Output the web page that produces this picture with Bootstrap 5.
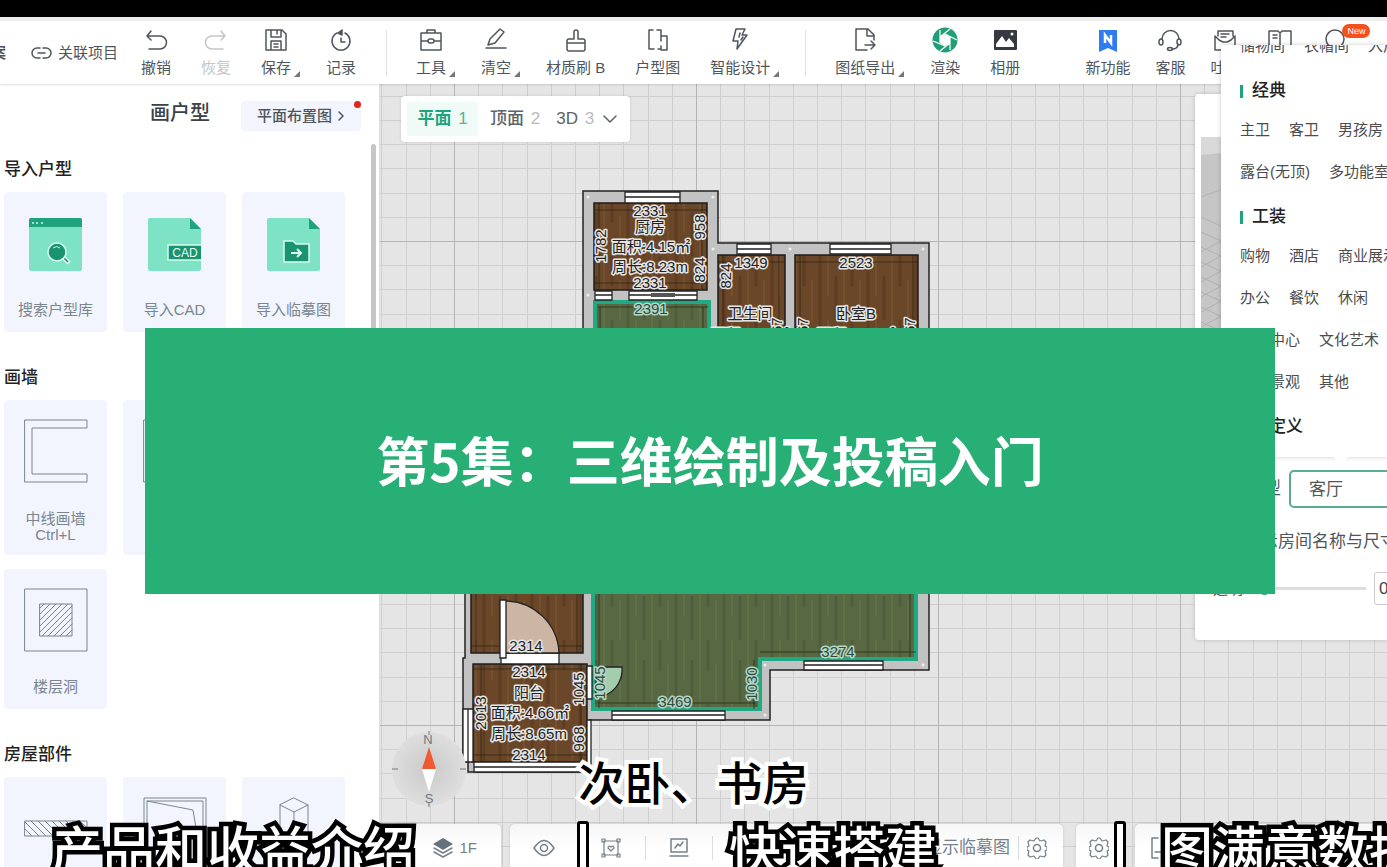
<!DOCTYPE html>
<html lang="zh-CN">
<head>
<meta charset="utf-8">
<meta name="viewport" content="width=device-width, initial-scale=1">
<title>第5集：三维绘制及投稿入门</title>
<link rel="stylesheet" href="https://cdn.jsdelivr.net/npm/bootstrap@5.3.0/dist/css/bootstrap.min.css">
<script src="https://cdn.jsdelivr.net/npm/bootstrap@5.3.0/dist/js/bootstrap.bundle.min.js"></script>
<style>
  :root { --ink:#50555c; --green:#1fa37c; --tile:#f2f5fd; }
  body { font-family:"Liberation Sans","Noto Sans CJK SC",sans-serif; font-size:15px; line-height:20px; color:var(--ink); background:#fff; }
  button { font-family:inherit; color:inherit; }
  svg { display:block; flex:none; }
  .ln { fill:none; stroke:currentColor; stroke-width:1.5; stroke-linejoin:round; stroke-linecap:round; }
  .letterbox { height:17px; background:#000; flex:none; }
  .topbar { height:67px; background:#fff; border-top:4px solid #eee; box-shadow:0 1px 2px #0002; z-index:3; }
  .cut-name { width:6px; }
  .project { gap:6px; margin-left:25px; margin-right:23px; }
  .tools { gap:30px; }
  .tool { border:0; background:none; padding:0; display:flex; flex-direction:column; align-items:center; gap:5px; white-space:nowrap; position:relative; }
  .tool.more { margin-right:5px; }
  .tool.more::after { content:""; position:absolute; right:-9px; bottom:1px; border:3px solid; border-color:transparent #777 #777 transparent; }
  .tool:disabled { color:#c4c6c8; }
  .rule { width:1px; height:46px; background:#e2e2e2; margin:0 -1px 0 0; }
  .support { gap:25px; margin-left:65px; }
  .newtag { left:22px; top:-3px; padding:0 5px; border-radius:8px; background:#f4511e; color:#fff; font-size:9px; line-height:14px; }

  .side { width:380px; background:#fff; padding-left:4px; border-right:1px solid #ddd; overflow:hidden; flex:none; }
  .side h1 { font-size:20px; line-height:30px; margin:0; color:#3c4148; }
  .side-head { padding:14px 18px 0 146px; }
  .layout-btn { border:0; background:var(--tile); border-radius:4px; width:120px; height:30px; font-weight:500; gap:6px; margin-top:3px; padding:0; }
  .reddot { width:7px; height:7px; border-radius:50%; background:#e0261c; right:0; top:0; }
  .side section { padding-top:34px; }
  .side section.lead-in { padding-top:27px; }
  .sect { font-size:17px; line-height:24px; font-weight:500; color:#222; margin:0 0 10px; }
  .tiles { display:grid; grid-template-columns:repeat(3,103px); gap:14px 16px; }
  .tile { border:0; border-radius:4px; background:var(--tile); height:140px; padding:0; display:flex; flex-direction:column; align-items:center; justify-content:space-between; padding:19px 0 14px; color:#7a858f; line-height:16px; }
  .tile.lib { padding-top:26px; }
  .tile.tall { height:155px; padding-bottom:12px; }
  .scroller { width:5px; height:330px; right:3px; top:60px; background:#c6c6c6; border-radius:3px; }

  .stage { background:#e5e5e5; min-width:0; }
  .dim { font-size:15px; fill:#222; stroke:#e6e6e6; stroke-width:3px; paint-order:stroke; stroke-linejoin:round; text-anchor:middle; }
  .dim.on { fill:#2c4a40; stroke:#b5d8c6; }
  .views { left:21px; top:12px; width:229px; height:46px; background:#fff; border-radius:4px; padding:6px; font-size:17px; box-shadow:0 0 3px #0002; }
  .views button { border:0; background:none; padding:0; white-space:nowrap; color:#5d6369; font-weight:500; }
  .views small { font-size:17px; color:#b8bbbe; font-weight:400; margin-left:2px; }
  .views .on { background:#f0faf7; color:var(--green); font-weight:700; width:71px; height:34px; border-radius:3px; margin-right:12px; }
  .views .on small { color:#4cb899; }

  .dock { left:15px; right:0; bottom:0; height:43px; gap:9px; }
  .pod { background:linear-gradient(#f6f6f6,#fff 60%); border-radius:5px 5px 0 0; box-shadow:0 0 3px #0002; display:flex; align-items:center; color:#76808a; padding-top:4px; }
  .pod button { border:0; background:none; padding:0; display:flex; align-items:center; justify-content:center; gap:6px; white-space:nowrap; }
  .pod .sep { width:1px; height:24px; background:#dcdcdc; }
  .pod .trace { font-size:17px; }

  .props { right:0; top:10px; width:192px; height:546px; background:#fff; border-radius:4px 0 0 4px; box-shadow:0 0 4px #0003; overflow:hidden; }
  .props label { font-size:17px; white-space:nowrap; flex:none; }
  .props .form-check-input { flex:none; }
  .preview { left:6px; top:43px; }
  .room-type { width:160px; height:38px; border:2px solid #58ad90; border-radius:5px; padding:0 18px 3px; font-size:17px; color:#555; background:#fff; flex:none; }
  .pct { width:48px; height:33px; border:1px solid #ccc; border-radius:3px; padding:0 4px; font-size:17px; flex:none; color:#444; background:#fff; }
  .fade-range { width:109px; flex:none; appearance:none; height:3px; background:#ddd; }
  .fade-range::-webkit-slider-thumb { appearance:none; width:13px; height:13px; border-radius:50%; background:var(--green); }
  .props-form { padding:0 0 0 18px; margin-top:328px; }
  .props .fade-label { font-size:15px; width:36px; }

  .pick { right:0; top:45px; width:166px; height:412px; background:#fff; box-shadow:0 0 5px #0003; z-index:4; padding-left:19px; border-radius:3px 0 0 3px; }
  .pick-in { height:412px; overflow:hidden; }
  .pick ul { display:flex; list-style:none; gap:19px; margin:0; padding:0; height:42px; align-items:center; white-space:nowrap; }
  .pick ul:first-child { margin-top:-20px; }
  .pick a { color:#4c4c4c; text-decoration:none; }
  .pick h2 { font-size:17px; font-weight:500; color:#222; height:42px; margin:0; padding-top:6px; display:flex; align-items:center; gap:10px; }
  .pick h2::before { content:""; width:3px; height:13px; background:var(--green); margin-right:-1px; }
  .pick::after { content:""; position:absolute; left:115px; bottom:-5px; width:10px; height:10px; background:#fff; transform:rotate(45deg); }

  .headline { left:145px; right:112px; top:328px; height:266px; padding-bottom:4px; background:#27af75; z-index:6; color:#fff; font-size:53px; line-height:64px; font-weight:700; font-family:"Noto Sans CJK SC",sans-serif; }
  .subtitle-line { left:0; right:0; bottom:60px; z-index:6; text-align:center; font:500 46px/54px "Noto Sans CJK SC",sans-serif; color:#000; -webkit-text-stroke:8px #fff; paint-order:stroke fill; stroke-linejoin:round; }
  .caption-line { left:51px; right:0; bottom:-8px; height:54px; z-index:7; white-space:nowrap; font:500 52px/54px "Noto Sans CJK SC",sans-serif; color:#fff; -webkit-text-stroke:9px #000; paint-order:stroke fill; stroke-linejoin:round; }
  .caption-line i { width:12px; height:60px; border:3px solid #000; border-radius:3px; background:#fff; flex:none; }
</style>
</head>
<body class="vh-100 overflow-hidden d-flex flex-column position-relative">
<div class="letterbox"></div>
<header class="topbar d-flex align-items-center flex-shrink-0 position-relative">
  <div class="cut-name d-flex justify-content-end overflow-hidden flex-shrink-0 fw-bold">案</div>
  <a href="#" class="project d-flex align-items-center text-decoration-none text-reset text-nowrap">
    <svg width="21" height="14" class="ln"><path d="M9 2H6a5 5 0 0 0 0 10h3M12 2h3a5 5 0 0 1 0 10h-3M7 7h7"/></svg>关联项目</a>
  <nav class="tools d-flex align-items-center flex-shrink-0">
    <button class="tool"><svg width="24" height="26" class="ln"><path d="M7 4L3 9l4 4M3 9h13a5 5 0 0 1 0 13H5"/></svg>撤销</button>
    <button class="tool" disabled><svg width="24" height="26" class="ln"><path d="M17 4l4 5-4 4M21 9H8a5 5 0 0 0 0 13h11"/></svg>恢复</button>
    <button class="tool more"><svg width="24" height="26" class="ln"><path d="M2 3h16l4 4v16H2zM7 3v7h10V3M13 4v3M7 23v-9h10v9M10 17h4M10 20h4"/></svg>保存</button>
    <button class="tool"><svg width="24" height="26" class="ln"><path d="M8 6a9 9 0 1 0 8 0"/><path d="M13 3v5l-4-2z" fill="currentColor"/><path d="M12 11v4h4"/></svg>记录</button>
    <span class="rule"></span>
    <button class="tool more"><svg width="24" height="26" class="ln"><path d="M2 6h20v17H2zM8 6V3h8v3M2 14h7M15 14h7"/><rect x="9" y="12" width="6" height="4" rx="2"/></svg>工具</button>
    <button class="tool more"><svg width="24" height="26" class="ln"><path d="M2 21h20M4 18l2-6L16 2l4 3-9 11zM4 18l7-2"/></svg>清空</button>
    <button class="tool"><svg width="24" height="26" class="ln"><path d="M3 14v8a2 2 0 0 0 2 2h14a2 2 0 0 0 2-2v-8a2 2 0 0 0-2-2h-5V5a2 2 0 0 0-4 0v7H5a2 2 0 0 0-2 2zM3 16h18"/></svg>材质刷 B</button>
    <button class="tool"><svg width="24" height="26" class="ln"><path d="M7 3H3v19h5M11 3h4v6M15 9h6v14h-6v-4M15 9v5M12 22h3"/></svg>户型图</button>
    <button class="tool more"><svg width="24" height="26" class="ln"><path d="M8 2h9l-3 6h5L9 22l1-8H5zM12 6l-1 4M15 10l-2 3"/></svg>智能设计</button>
    <span class="rule"></span>
    <button class="tool more"><svg width="24" height="26" class="ln"><path d="M14 23H3V2h12l6 6v5M14 2v7h7M12 18h10M18 14l4 4-4 4"/></svg>图纸导出</button>
    <button class="tool"><svg width="26" height="26"><circle cx="13" cy="13" r="12.500" fill="#1f9e78"/><path d="M13 7l5 3v6l-5 3-5-3v-6z" fill="#fff"/><path d="M8 10l10-8M13 7l12 6M18 10v13M18 16L8 24M13 19L1 14M8 16V3" stroke="#fff" stroke-width="1.200"/></svg>渲染</button>
    <button class="tool"><svg width="24" height="26"><rect x="1" y="3" width="23" height="20" rx="1" fill="#363a40"/><path d="M3 20v-3l6-8 4 6 3-4 5 6v3z" fill="#fff"/><circle cx="19" cy="7" r="1.500" fill="#fff"/></svg>相册</button>
  </nav>
  <nav class="support d-flex align-items-center flex-shrink-0">
    <button class="tool"><svg width="24" height="26"><path d="M3 3h18v22l-9-4-9 4z" fill="#2f7bf0"/><path d="M9 16V8l6 8V8" fill="none" stroke="#fff" stroke-width="2.500"/></svg>新功能</button>
    <button class="tool"><svg width="24" height="26" class="ln"><path d="M4 12a8 8 0 0 1 17 0M20 17c0 4-3 5-6 5"/><ellipse cx="3" cy="15" rx="2" ry="3"/><ellipse cx="21" cy="15" rx="2" ry="3"/><ellipse cx="12" cy="22" rx="2.500" ry="1.500"/></svg>客服</button>
    <button class="tool"><svg width="24" height="26" class="ln"><path d="M5 9V4h15v5M2 9v14h20V9l-4 4-4 2h-4l-4-2zM8 7h8M8 10h5"/></svg>吐槽</button>
    <button class="tool"><svg width="24" height="26" class="ln"><path d="M12 6v18M1 4h9l2 2 2-2h9v18H1zM5 8h4M5 11h4"/></svg>学院</button>
    <button class="tool"><svg width="24" height="26" class="ln"><circle cx="12" cy="12" r="9"/><path d="M4 21h16"/></svg><span class="newtag position-absolute">New</span>消息</button>
  </nav>
</header>

<main class="d-flex flex-grow-1 position-relative overflow-hidden">
  <aside class="side position-relative">
    <div class="side-head d-flex justify-content-between">
      <h1 class="fw-medium">画户型</h1>
      <button class="layout-btn d-flex align-items-center justify-content-center position-relative">平面布置图
        <svg width="7" height="12" class="ln" stroke-width="2"><path d="M1 2l4 4-4 4"/></svg><span class="reddot position-absolute"></span></button>
    </div>
    <span class="scroller position-absolute"></span>
    <section class="lead-in"><h2 class="sect">导入户型</h2>
      <div class="tiles">
        <button class="tile lib"><svg width="54" height="54"><rect width="53" height="53" rx="2" fill="#7ee3c4"/><path d="M0 9V2q0-2 2-2h49q2 0 2 2v7z" fill="#1fa37c"/><g fill="#caf5e7"><circle cx="4" cy="5" r="1"/><circle cx="8" cy="5" r="1"/><circle cx="13" cy="5" r="1"/></g><path d="M34 39l6 6" stroke="#e8fff7" stroke-width="4"/><path d="M35 40l4 4" stroke="#1f7e63" stroke-width="1.500"/><circle cx="28" cy="34" r="9" fill="#1a936f" stroke="#d8fbef" stroke-width="1.500"/><path d="M24 30q4-3 7 0" fill="none" stroke="#bdf5e2"/></svg>搜索户型库</button>
        <button class="tile lib"><svg width="54" height="54"><path d="M2 0h40l11 11v40q0 2-2 2H2q-2 0-2-2V2q0-2 2-2z" fill="#7ee3c4"/><path d="M42 0l11 11H42z" fill="#1fa37c"/><path d="M53 27H20v15h33" fill="#1a936f" stroke="#d8fbef" stroke-width="1.500"/><text x="37" y="39" text-anchor="middle" font-size="12" fill="#e8fff7">CAD</text></svg>导入CAD</button>
        <button class="tile lib"><svg width="54" height="54"><path d="M2 0h40l11 11v40q0 2-2 2H2q-2 0-2-2V2q0-2 2-2z" fill="#7ee3c4"/><path d="M42 0l11 11H42z" fill="#1fa37c"/><path d="M17 23h9l3 3h13v18H17z" fill="#1a936f" stroke="#d8fbef" stroke-width="1.500"/><path d="M24 35h10M30 31l4 4-4 4" fill="none" stroke="#d8fbef" stroke-width="2"/></svg>导入临摹图</button>
      </div>
    </section>
    <section><h2 class="sect">画墙</h2>
      <div class="tiles">
        <button class="tile tall"><svg width="64" height="65" class="ln" style="stroke-width:1"><path d="M1 1h62v8H8v46h55v8H1z"/></svg><span>中线画墙<br>Ctrl+L</span></button>
        <button class="tile tall"><svg width="64" height="65" class="ln" style="stroke-width:1"><path d="M1 1h62v62H1z"/></svg><span>内线画墙<br>Ctrl+K</span></button>
        <span></span>
        <button class="tile"><svg width="64" height="65" class="ln" style="stroke-width:1"><path d="M1 1h62v62H1zM16 16h32v32H16zM16 20l4-4M16 26l10-10M16 32l16-16M16 38l22-22M16 44l28-28M18 48l30-30M24 48l24-24M30 48l18-18M36 48l12-12M42 48l6-6"/></svg>楼层洞</button>
      </div>
    </section>
    <section><h2 class="sect">房屋部件</h2>
      <div class="tiles">
        <button class="tile"><svg width="64" height="65" class="ln" style="stroke-width:1"><path d="M1 25h62v15H1zM1 33l7 7M1 26l14 14M7 25l15 15M14 25l15 15M21 25l15 15M28 25l15 15M35 25l15 15M42 25l15 15M49 25l14 14M56 25l7 7"/></svg>墙体</button>
        <button class="tile"><svg width="64" height="65" class="ln" style="stroke-width:1"><path d="M1 64V2h62v62M4 64V5h56v59M4 5l46 9 5 30"/></svg>门洞</button>
        <button class="tile"><svg width="30" height="65" class="ln" style="stroke-width:1"><path d="M15 2l14 7v40l-14 7-14-7V9zM1 9l14 7 14-7M15 16v40"/></svg>柱子</button>
      </div>
    </section>
  </aside>

  <section class="stage flex-grow-1 position-relative overflow-hidden">
    <svg width="100%" height="100%" class="position-absolute top-0 start-0">
      <defs>
        <pattern id="grid" width="242" height="242" x="454" y="241" patternUnits="userSpaceOnUse"><path d="M24.500 0v242M48.500 0v242M73.500 0v242M97.500 0v242M121.500 0v242M145.500 0v242M169.500 0v242M194.500 0v242M218.500 0v242M0 24.500h242M0 48.500h242M0 73.500h242M0 97.500h242M0 121.500h242M0 145.500h242M0 169.500h242M0 194.500h242M0 218.500h242" stroke="#cfcfcf"/><path d="M.5 0v242M0 .5h242" stroke="#b4b4b4"/></pattern>
        <pattern id="wood" width="48" height="64" patternUnits="userSpaceOnUse"><rect width="48" height="64" fill="#6b4729"/><path d="M4 0v64M20 20v44M36 0v30" stroke="#5e3d23" stroke-width="3"/><path d="M12 0v40M28 0v64M44 24v40" stroke="#745031" stroke-width="2"/></pattern>
        <pattern id="moss" width="48" height="64" patternUnits="userSpaceOnUse"><rect width="48" height="64" fill="#586843"/><path d="M4 0v64M20 20v44M36 0v30" stroke="#4f5f3d" stroke-width="3"/><path d="M12 0v40M28 0v64M44 24v40" stroke="#607049" stroke-width="2"/></pattern>
        <radialGradient id="halo"><stop offset="0" stop-color="#c9c9c9"/><stop offset="1" stop-color="#dedede"/></radialGradient>
      </defs>
      <g transform="translate(-380,-84)">
        <rect x="380" y="84" width="3000" height="3000" fill="url(#grid)"/>
        <!-- walls -->
        <path d="M583 191H718V243H929V670H770V720H590V772H468V762H463V658H465V500H583z" fill="#c2c2c2" stroke="#222" stroke-width="1.500"/>
        <g fill="url(#wood)" stroke="#1d1d1d" stroke-width="1.500">
          <rect x="594" y="203" width="113" height="87"/><rect x="718" y="255" width="67" height="200"/><rect x="795" y="255" width="123" height="200"/>
          <rect x="471" y="500" width="112" height="153"/><rect x="473" y="664" width="114" height="98"/></g>
        <path d="M595 302H709V500H916V659H760V709H593V500H595z" fill="url(#moss)" stroke="#20a982" stroke-width="4"/>
        <path d="M599 203v87M702 203v87M594 210h113M594 283h113M723 255v80M779 255v80M718 262h67M800 255v80M913 255v80M795 262h123M476 590v63M577 590v63M471 646h112M481 664v98M581 664v98M473 669h114M473 755h114M600 307v30M703 307v30M598 307h110M599 590v118M754 660v49M598 703h158M760 652h156M910 590v67" stroke="#221a" fill="none"/>
        <!-- windows -->
        <g fill="#fff" stroke="#222" stroke-width="1.300">
          <path d="M625 192h55v11h-55zM625 197h55M737 244h34v10h-34zM737 249h34M830 244h61v10h-61zM830 249h61M595 291h17v9h-17zM595 295h17M629 291h68v9h-68zM629 295h68M612 711h113v9H612zM612 715h113M804 661h79v9h-79zM804 665h79M463 709h10v53h-10zM468 709v53M474 762h112v10H474zM474 767h112M587 666h5v33h-5zM587 720h4v50h-4z"/>
          <path d="M501 653h58v11h-58z"/><path d="M505 601A54 54 0 0 1 559 653H505z" fill="#cdb5a3"/><path d="M500 600h6v58h-6z"/>
          <path d="M596 667h26a28 28 0 0 1-16 28h-10z" fill="#a4cdae"/></g>
        <path d="M651 295h24" stroke="#555" stroke-width="4"/>
        <g fill="#eee"><circle cx="588" cy="197" r="1.500"/><circle cx="713" cy="197" r="1.500"/><circle cx="713" cy="249" r="1.500"/><circle cx="790" cy="249" r="1.500"/><circle cx="923" cy="249" r="1.500"/><circle cx="588" cy="295" r="1.500"/><circle cx="765" cy="665" r="1.500"/><circle cx="923" cy="665" r="1.500"/><circle cx="765" cy="715" r="1.500"/></g>
        <g class="dim">
          <text x="650" y="216">2331</text><text x="650" y="232">厨房</text><text x="651" y="252">面积:4.15㎡</text><text x="650" y="272">周长:8.23m</text><text x="650" y="288">2331</text>
          <text transform="translate(606,246) rotate(-90)">1782</text><text transform="translate(705,227) rotate(-90)">958</text><text transform="translate(705,270) rotate(-90)">824</text><text transform="translate(731,276) rotate(-90)">824</text>
          <text x="751" y="268">1349</text><text x="856" y="268">2523</text><text x="750" y="319">卫生间</text><text x="856" y="319">卧室B</text><text x="856" y="340">面积:8.88㎡</text><text x="750" y="340">面积:4.07㎡</text>
          <text transform="translate(782,334) rotate(-90)">2267</text><text transform="translate(808,334) rotate(-90)">2267</text><text transform="translate(915,334) rotate(-90)">2267</text>
          <text x="526" y="651">2314</text><text x="529" y="677">2314</text><text x="529" y="698">阳台</text><text x="530" y="718">面积:4.66㎡</text><text x="529" y="739">周长:8.65m</text><text x="529" y="760">2314</text>
          <text transform="translate(486,713) rotate(-90)">2013</text><text transform="translate(584,689) rotate(-90)">1045</text><text transform="translate(584,739) rotate(-90)">968</text>
        </g>
        <g class="dim on"><text x="651" y="314">2391</text><text x="675" y="707">3469</text><text x="838" y="657">3274</text><text transform="translate(605,683) rotate(-90)">1045</text><text transform="translate(757,684) rotate(-90)">1030</text></g>
        <!-- compass -->
        <circle cx="429" cy="769" r="37" fill="url(#halo)"/>
        <path d="M429 747l7 22h-14z" fill="#f05a33"/><path d="M429 792l7-23h-14z" fill="#fff"/>
        <path d="M392 769h6M460 769h6M429 731v4M429 803v4" stroke="#777"/>
        <g font-size="13" fill="#6e7880" text-anchor="middle"><text x="428" y="744">N</text><text x="429" y="803">S</text></g>
      </g>
    </svg>

    <div class="views position-absolute d-flex align-items-center">
      <button class="on">平面 <small>1</small></button><button class="me-3">顶面 <small>2</small></button><button class="me-2">3D <small>3</small></button>
      <button aria-label="更多视图"><svg width="16" height="10" class="ln"><path d="M2 2l6 6 6-6"/></svg></button>
    </div>

    <div class="props position-absolute">
      <svg width="186" height="220" class="preview position-absolute"><rect width="186" height="220" fill="#d9d9d9"/><path d="M0 18l20-2v204H0z" fill="#c6c6c6"/><path d="M0 60l22-8M0 80l22 10M0 95l22 10M0 110l22 10M0 125l22 10M0 140l22 10M0 155l22 10M0 170l22 10M0 185l22 10M0 115l22-12M0 130l22-12M0 145l22-12M0 160l22-12M0 175l22-12M0 190l22-12" stroke="#b0b0b0"/></svg>
      <form class="props-form">
        <div class="d-flex align-items-center pt-5 gap-2"><label for="roomType">房间类型</label>
          <input id="roomType" class="room-type" value="客厅"></div>
        <div class="d-flex align-items-center gap-3 pt-4 pb-3 mb-1"><input type="checkbox" id="showName" class="form-check-input m-0"><label for="showName">显示房间名称与尺寸</label></div>
        <div class="d-flex align-items-center"><label for="fade" class="fade-label me-2">透明</label><input id="fade" type="range" class="fade-range me-2" value="1"><input aria-label="透明度" class="pct" value="0"></div>
      </form>
    </div>

    <div class="dock position-absolute d-flex">
      <div class="pod" style="width:106px"><button class="ms-auto me-4"><svg width="20" height="20"><path d="M10 0l10 6-10 6L0 6z" fill="#65717c"/><path d="M1 10l9 5 9-5M1 14l9 5 9-5" class="ln"/></svg>1F</button></div>
      <div class="pod" style="width:553px">
        <button style="width:67px"><svg width="22" height="18" class="ln"><path d="M1 9q10-15 20 0-10 15-20 0z"/><circle cx="11" cy="9" r="3.500"/></svg></button>
        <button style="width:68px"><svg width="20" height="20" class="ln"><path d="M3 3h14v14H3zM1 1h3v3H1zM16 1h3v3h-3zM1 16h3v3H1zM16 16h3v3h-3zM10 13l-3-3q0-3 3-1 3-2 3 1z" stroke-width="1.200"/></svg></button><span class="sep"></span>
        <button style="width:66px"><svg width="20" height="20" class="ln"><path d="M2 1h16v13H2zM1 18h18M6 10l3-4 2 2 3-4"/></svg></button><span class="sep"></span>
        <button class="trace ms-auto me-2">显示临摹图</button><span class="sep"></span>
        <button class="ps-2 pe-3"><svg width="20" height="22" class="ln"><path d="M7 4l2-3h2l2 3 4-1 2 2-1 4 2 1v3l-2 1 1 4-2 2-4-1-2 3H9l-2-3-4 1-2-2 1-4-2-1v-3l2-1-1-4 2-2z" stroke-width="1.200"/><circle cx="10" cy="11" r="3.500"/></svg></button>
      </div>
      <div class="pod justify-content-center ms-1" style="width:46px"><button><svg width="20" height="22" class="ln"><path d="M7 4l2-3h2l2 3 4-1 2 2-1 4 2 1v3l-2 1 1 4-2 2-4-1-2 3H9l-2-3-4 1-2-2 1-4-2-1v-3l2-1-1-4 2-2z" stroke-width="1.200"/><circle cx="10" cy="11" r="3.500"/></svg></button></div>
      <div class="pod flex-grow-1 ps-3 ms-1"><button aria-label="全屏"><svg width="20" height="22" class="ln"><path d="M7 1H1v20h6M13 1h6v6M4 15h6"/></svg></button></div>
    </div>
  </section>
</main>

<div class="pick position-absolute"><div class="pick-in">
  <ul><li><a href="#">储物间</a></li><li><a href="#">衣帽间</a></li><li><a href="#">入户</a></li></ul>
  <h2>经典</h2>
  <ul><li><a href="#">主卫</a></li><li><a href="#">客卫</a></li><li><a href="#">男孩房</a></li></ul>
  <ul><li><a href="#">露台(无顶)</a></li><li><a href="#">多功能室</a></li></ul>
  <h2>工装</h2>
  <ul><li><a href="#">购物</a></li><li><a href="#">酒店</a></li><li><a href="#">商业展示</a></li></ul>
  <ul><li><a href="#">办公</a></li><li><a href="#">餐饮</a></li><li><a href="#">休闲</a></li></ul>
  <ul><li><a href="#">会议中心</a></li><li><a href="#">文化艺术</a></li></ul>
  <ul><li><a href="#">园林景观</a></li><li><a href="#">其他</a></li></ul>
  <h2>自定义</h2>
</div></div>

<div class="headline position-absolute d-flex align-items-center justify-content-center text-nowrap">第5集：三维绘制及投稿入门</div>
<div class="subtitle-line position-absolute">次卧、书房</div>
<div class="caption-line position-absolute d-flex">
  <span>产品和收益介绍</span><i style="margin-left:162px"></i><span style="margin-left:140px">快速搭建</span><i style="margin-left:177px"></i><span style="margin-left:35px">图满意数据</span>
</div>
</body>
</html>
